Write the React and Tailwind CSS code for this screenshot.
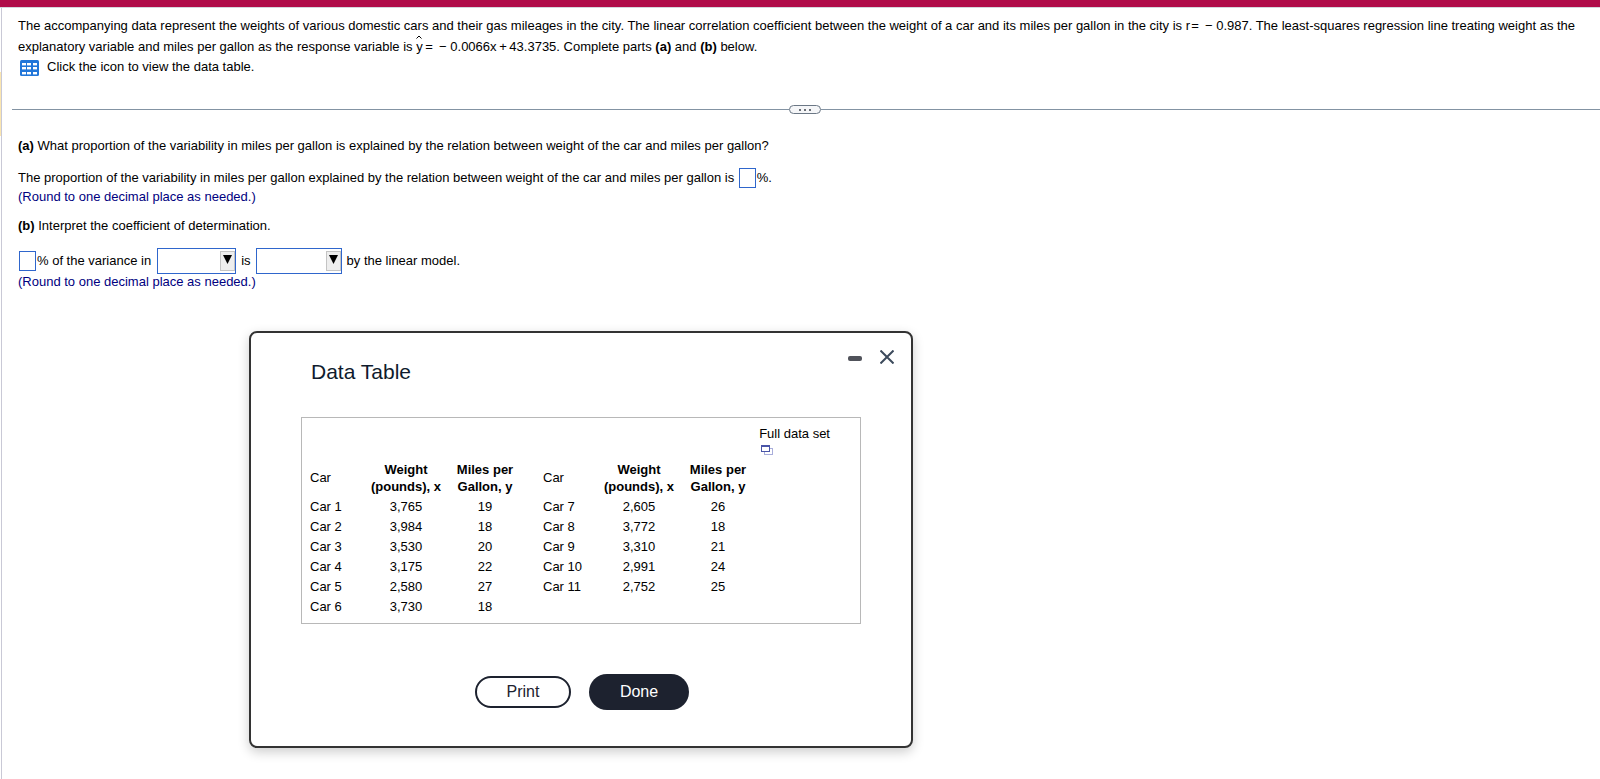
const firstCars = [
  ["Car 1", "3,765", "19"],
  ["Car 2", "3,984", "18"],
  ["Car 3", "3,530", "20"],
  ["Car 4", "3,175", "22"],
  ["Car 5", "2,580", "27"],
  ["Car 6", "3,730", "18"],
];

const lastCars = [
  ["Car 7", "2,605", "26"],
  ["Car 8", "3,772", "18"],
  ["Car 9", "3,310", "21"],
  ["Car 10", "2,991", "24"],
  ["Car 11", "2,752", "25"],
];

function GridIcon() {
  return (
    <svg width="19" height="16" viewBox="0 0 19 16" aria-hidden="true">
      <rect x="0" y="0" width="19" height="16" rx="1.5" fill="#2176d9" />
      <g fill="#fff">
        {[3, 7, 12].map((y) =>
          [2, 7, 13].map((x) => <rect key={`${x}-${y}`} x={x} y={y} width="4" height="2.4" />)
        )}
      </g>
    </svg>
  );
}

function PopOutIcon() {
  return (
    <svg width="12" height="10" viewBox="0 0 12 10" aria-hidden="true">
      <rect x="3.5" y="3.5" width="8" height="6" fill="#fff" stroke="#a9aedb" />
      <rect x="0.5" y="0.5" width="8" height="6" fill="#fff" stroke="#4a55a8" />
      <rect x="0" y="0" width="9" height="2" fill="#4a55a8" />
    </svg>
  );
}

function PercentBox({ label }) {
  return (
    <input
      type="text"
      aria-label={label}
      className="mx-px h-5 w-[17px] shrink-0 border border-[#2f66cc] bg-white text-center outline-none"
    />
  );
}

function Choice({ label, options, width }) {
  return (
    <span className={`relative flex h-[26px] ${width}`}>
      <select
        aria-label={label}
        defaultValue=""
        className="w-full appearance-none border border-[#2f66cc] bg-white pr-4 pl-1 outline-none"
      >
        <option value=""></option>
        {options.map((o) => (
          <option key={o}>{o}</option>
        ))}
      </select>
      <span className="pointer-events-none absolute top-[3px] right-px flex h-5 w-[15px] items-start justify-center border border-[#c4c4c4] bg-[#eeeeee] pt-[3px]">
        <svg width="9" height="9" viewBox="0 0 9 9" aria-hidden="true">
          <path d="M0 0h9L4.5 9z" fill="#000" />
        </svg>
      </span>
    </span>
  );
}

function CarTable({ rows }) {
  return (
    <table className="self-start text-center">
      <thead>
        <tr className="h-[38px] leading-[17px]">
          <th className="w-[61px] px-2 pb-0.5 text-left font-normal">Car</th>
          <th className="w-[86px]">
            Weight
            <br />
            (pounds), x
          </th>
          <th className="w-[72px]">
            Miles per
            <br />
            Gallon, y
          </th>
        </tr>
      </thead>
      <tbody>
        {rows.map(([car, weight, mpg]) => (
          <tr key={car} className="h-5 leading-5">
            <td className="pl-2 text-left whitespace-nowrap">{car}</td>
            <td>{weight}</td>
            <td>{mpg}</td>
          </tr>
        ))}
      </tbody>
    </table>
  );
}

function DataTableDialog() {
  return (
    <section
      role="dialog"
      aria-labelledby="data-table-title"
      className="absolute top-[331px] left-[249px] w-[664px] rounded-lg border-2 border-[#333333] bg-white px-[50px] pb-9 shadow-[0_4px_12px_rgba(0,0,0,0.2)]"
    >
      <header className="flex items-start justify-between pt-3.5">
        <h2 id="data-table-title" className="pt-[11px] pl-2.5 text-[21px] leading-7 text-[#0f1b2d]">
          Data Table
        </h2>
        <div className="-mr-9 flex gap-3">
          <button type="button" aria-label="Minimize" className="flex size-5 items-center justify-center pt-0.5">
            <span className="h-[5px] w-3.5 rounded-xs bg-[#50525a]"></span>
          </button>
          <button type="button" aria-label="Close" className="flex size-5 items-center justify-center">
            <svg width="14" height="14" viewBox="0 0 14 14" aria-hidden="true">
              <path d="M0.5 0.5l13 13M13.5 0.5l-13 13" stroke="#3c4a5c" strokeWidth="2" />
            </svg>
          </button>
        </div>
      </header>
      <div className="mt-[31px] border border-[#b8b8b8] pt-2 pb-1.5">
        <div className="flex justify-end pr-[30px]">
          <div className="flex flex-col items-start leading-4">
            <span>Full data set</span>
            <button type="button" aria-label="Open full data set" className="ml-0.5 pt-[3px] pb-1">
              <PopOutIcon />
            </button>
          </div>
        </div>
        <div className="flex gap-3.5">
          <CarTable rows={firstCars} />
          <CarTable rows={lastCars} />
        </div>
      </div>
      <footer className="mt-[50px] flex items-center justify-center gap-[18px] pl-0.5 text-base">
        <button type="button" className="h-8 w-24 rounded-full border-2 border-[#1d222f] text-[#1d222f]">
          Print
        </button>
        <button type="button" className="h-9 w-[100px] rounded-full bg-[#1d222f] text-white">
          Done
        </button>
      </footer>
    </section>
  );
}

export default function App() {
  return (
    <div className="relative flex min-h-screen flex-col bg-white font-['Liberation_Sans',Arial,sans-serif] text-[13px] text-black">
      <div className="h-2 border-b border-[#d5d5dc] bg-[#b00b49]"></div>
      <div className="flex flex-1">
        <div className="w-0.5 border-r border-[#c9c9d6] pt-16">
          <div className="h-16 bg-[#fbe6b0]"></div>
        </div>
        <main className="flex-1 pt-[7px]">
          <div className="pr-5 pl-4">
            <p className="leading-[21px]">
              The accompanying data represent the weights of various domestic cars and their gas mileages in the city.
              The linear correlation coefficient between the weight of a car and its miles per gallon in the city is
              r&#8202;= &thinsp;− 0.987. The least-squares regression line treating weight as the explanatory variable
              and miles per gallon as the response variable is{" "}
              <span className="relative">
                y
                <svg className="absolute -top-1 left-0" width="6" height="4" viewBox="0 0 6 4" aria-hidden="true">
                  <path d="M0.5 3.5L3 1l2.5 2.5" fill="none" stroke="#000" />
                </svg>
              </span>
              &thinsp;= &thinsp;− 0.0066x&thinsp;+&thinsp;43.3735. Complete parts <b>(a)</b> and <b>(b)</b> below.
            </p>
            <button type="button" className="flex items-start gap-2 pl-0.5 leading-5">
              <span className="pt-[3px]">
                <GridIcon />
              </span>
              Click the icon to view the data table.
            </button>
          </div>
          <div className="mt-7 flex items-center pl-2.5">
            <div className="h-px w-[777px] bg-[#8393a3]"></div>
            <button
              type="button"
              aria-label="Resize panels"
              className="flex h-[9px] w-8 items-center justify-center gap-[3px] rounded-full border border-[#6b7785] bg-[#f5f6f8]"
            >
              <span className="size-0.5 bg-[#6b6f76]"></span>
              <span className="size-0.5 bg-[#6b6f76]"></span>
              <span className="size-0.5 bg-[#6b6f76]"></span>
            </button>
            <div className="h-px flex-1 bg-[#8393a3]"></div>
          </div>
          <div className="pt-[22px] pr-5 pl-4 leading-5">
            <p>
              <b>(a)</b> What proportion of the variability in miles per gallon is explained by the relation between
              weight of the car and miles per gallon?
            </p>
            <div className="mt-3 flex items-center">
              The proportion of the variability in miles per gallon explained by the relation between weight of the car
              and miles per gallon is&nbsp;
              <PercentBox label="Proportion of variability explained" />
              <span>%.</span>
            </div>
            <p className="leading-[18px] text-[#000080]">(Round to one decimal place as needed.)</p>
            <p className="mt-2.5">
              <b>(b)</b> Interpret the coefficient of determination.
            </p>
            <div className="mt-3 flex items-center gap-[5px]">
              <span className="flex items-center pr-px">
                <PercentBox label="Percent of the variance" />
                % of the variance in
              </span>
              <Choice label="Response" width="w-[79px]" options={["gas mileage", "weight"]} />
              is
              <Choice label="Relation" width="w-[86px]" options={["explained", "not explained"]} />
              by the linear model.
            </div>
            <p className="leading-4 text-[#000080]">(Round to one decimal place as needed.)</p>
          </div>
        </main>
      </div>
      <DataTableDialog />
    </div>
  );
}
